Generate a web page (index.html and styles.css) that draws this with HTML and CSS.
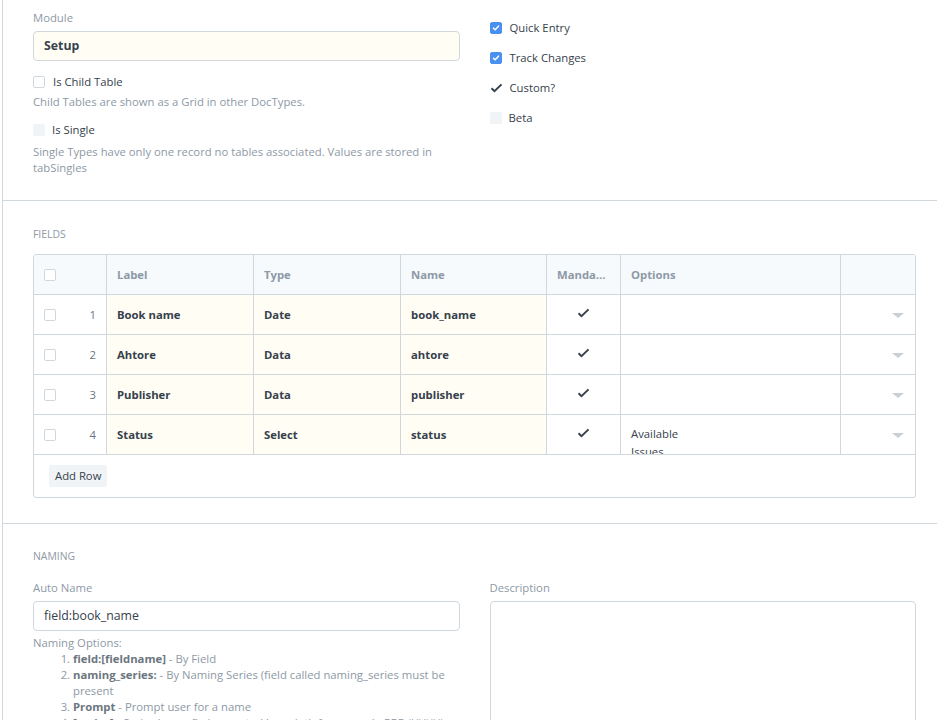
FILE: index.html
```html
<!DOCTYPE html>
<html>
<head>
<meta charset="utf-8">
<link rel="stylesheet" href="styles.css">
</head>
<body>
<div class="layout">
  <section class="section top">
    <div class="col">
      <div class="control-label">Module</div>
      <div class="input bold yellow">Setup</div>
      <div class="check-row first"><span class="box"></span><span class="check-label">Is Child Table</span></div>
      <div class="help one">Child Tables are shown as a Grid in other DocTypes.</div>
      <div class="check-row second"><span class="box disabled"></span><span class="check-label tight">Is Single</span></div>
      <div class="help two">Single Types have only one record no tables associated. Values are stored in tabSingles</div>
    </div>
    <div class="col right">
      <div class="check-row r"><span class="box checked"><svg viewBox="0 0 12 12" width="12" height="12"><path d="M3 6.2l2 2 4-4.4" fill="none" stroke="#fff" stroke-width="1.8" stroke-linecap="round" stroke-linejoin="round"/></svg></span><span class="check-label">Quick Entry</span></div>
      <div class="check-row r"><span class="box checked"><svg viewBox="0 0 12 12" width="12" height="12"><path d="M3 6.2l2 2 4-4.4" fill="none" stroke="#fff" stroke-width="1.8" stroke-linecap="round" stroke-linejoin="round"/></svg></span><span class="check-label">Track Changes</span></div>
      <div class="check-row r"><span class="tick"><svg viewBox="0 0 13 10" width="13" height="10"><path d="M1.5 5.2l3 3 7-6.8" fill="none" stroke="#36414c" stroke-width="2"/></svg></span><span class="check-label tight">Custom?</span></div>
      <div class="check-row r"><span class="box disabled"></span><span class="check-label tight">Beta</span></div>
    </div>
  </section>

  <section class="section fields">
    <div class="section-head">Fields</div>
    <div class="grid">
      <div class="grid-row head">
        <div class="cell idx"><span class="box"></span></div>
        <div class="cell">Label</div>
        <div class="cell">Type</div>
        <div class="cell">Name</div>
        <div class="cell">Manda...</div>
        <div class="cell">Options</div>
        <div class="cell last"></div>
      </div>
      <div class="grid-row">
        <div class="cell idx"><span class="box"></span><span class="num">1</span></div>
        <div class="cell y b">Book name</div>
        <div class="cell y b">Date</div>
        <div class="cell y b">book_name</div>
        <div class="cell c"><svg viewBox="0 0 13 10" width="13" height="10"><path d="M1.5 5.2l3 3 7-6.8" fill="none" stroke="#36414c" stroke-width="2"/></svg></div>
        <div class="cell"></div>
        <div class="cell last"><span class="caret"></span></div>
      </div>
      <div class="grid-row">
        <div class="cell idx"><span class="box"></span><span class="num">2</span></div>
        <div class="cell y b">Ahtore</div>
        <div class="cell y b">Data</div>
        <div class="cell y b">ahtore</div>
        <div class="cell c"><svg viewBox="0 0 13 10" width="13" height="10"><path d="M1.5 5.2l3 3 7-6.8" fill="none" stroke="#36414c" stroke-width="2"/></svg></div>
        <div class="cell"></div>
        <div class="cell last"><span class="caret"></span></div>
      </div>
      <div class="grid-row">
        <div class="cell idx"><span class="box"></span><span class="num">3</span></div>
        <div class="cell y b">Publisher</div>
        <div class="cell y b">Data</div>
        <div class="cell y b">publisher</div>
        <div class="cell c"><svg viewBox="0 0 13 10" width="13" height="10"><path d="M1.5 5.2l3 3 7-6.8" fill="none" stroke="#36414c" stroke-width="2"/></svg></div>
        <div class="cell"></div>
        <div class="cell last"><span class="caret"></span></div>
      </div>
      <div class="grid-row">
        <div class="cell idx"><span class="box"></span><span class="num">4</span></div>
        <div class="cell y b">Status</div>
        <div class="cell y b">Select</div>
        <div class="cell y b">status</div>
        <div class="cell c"><svg viewBox="0 0 13 10" width="13" height="10"><path d="M1.5 5.2l3 3 7-6.8" fill="none" stroke="#36414c" stroke-width="2"/></svg></div>
        <div class="cell opts">Available<br>Issues</div>
        <div class="cell last"><span class="caret"></span></div>
      </div>
      <div class="grid-foot"><button class="btn">Add Row</button></div>
    </div>
  </section>

  <section class="section naming">
    <div class="section-head">Naming</div>
    <div class="cols">
      <div class="col">
        <div class="control-label">Auto Name</div>
        <div class="input">field:book_name</div>
        <div class="help naming-help">Naming Options:
          <ol>
            <li><b>field:[fieldname]</b> - By Field</li>
            <li><b>naming_series:</b> - By Naming Series (field called naming_series must be present</li>
            <li><b>Prompt</b> - Prompt user for a name</li>
            <li><b>[series]</b> - Series by prefix (separated by a dot); for example PRE.#####</li>
          </ol>
        </div>
      </div>
      <div class="col">
        <div class="control-label">Description</div>
        <div class="textarea"></div>
      </div>
    </div>
  </section>
</div>
</body>
</html>
```

FILE: styles.css
```css
* { box-sizing: border-box; }
html, body { margin: 0; padding: 0; background: #fff; overflow: hidden; }
body {
  font-family: "Open Sans", "Noto Sans", sans-serif;
  font-size: 11.3px;
  color: #36414c;
  width: 937px;
  height: 720px;
}
.layout {
  margin-left: 2px;
  border-left: 1px solid #d1d8dd;
  height: 720px;
  overflow: hidden;
}
.section {
  border-bottom: 1px solid #d1d8dd;
  padding: 0 21px 0 30px;
}
.top {
  display: grid;
  grid-template-columns: 1fr 1fr;
  column-gap: 30px;
  padding-top: 10px;
  padding-bottom: 24px;
}
.control-label {
  color: #8d99a6;
  font-size: 11.3px;
  line-height: 16px;
  margin-bottom: 5px;
}
.input {
  height: 30px;
  border: 1px solid #d1d8dd;
  border-radius: 4px;
  padding: 0 10px;
  line-height: 28px;
  font-size: 12.3px;
  color: #36414c;
}
.input.yellow { background: #fffdf4; }
.input.bold { font-weight: 700; }
.check-row {
  display: flex;
  align-items: center;
  height: 16px;
  line-height: 16px;
}
.check-row.first { margin-top: 13px; }
.check-row.second { margin-top: 12px; }
.check-row.r { margin-top: 14px; }
.check-row.r:first-child { margin-top: 10px; }
.box {
  width: 12px;
  height: 12px;
  border: 1px solid #d1d8dd;
  border-radius: 2px;
  background: #fff;
  flex: none;
  display: inline-flex;
  align-items: center;
  justify-content: center;
}
.box.disabled { background: #f0f4f7; border-color: #f0f4f7; }
.box.checked { background: #4a90f0; border-color: #4a90f0; }
.box.checked svg { display: block; }
.tick { width: 13px; flex: none; display: inline-flex; }
.check-label { margin-left: 8px; }
.check-label.tight { margin-left: 7px; }
.help {
  color: #8d99a6;
  font-size: 11.3px;
  line-height: 16px;
}
.help.one { margin-top: 4px; }
.help.two { margin-top: 6px; }

.fields { padding-top: 26px; padding-bottom: 25px; }
.section-head {
  text-transform: uppercase;
  color: #8d99a6;
  font-size: 10.4px;
  line-height: 14px;
  margin-bottom: 13px;
}
.grid {
  border: 1px solid #d1d8dd;
  border-radius: 3px;
  overflow: hidden;
}
.grid-row {
  display: grid;
  grid-template-columns: 73px 147px 147px 146px 74px 220px 1fr;
  height: 40px;
  border-bottom: 1px solid #d1d8dd;
}
.grid-row.head { background: #f7fafc; }
.grid-row.head .cell { font-weight: 700; color: #8d99a6; }
.cell {
  border-right: 1px solid #d1d8dd;
  padding: 10px 10px;
  line-height: 19px;
  overflow: hidden;
  white-space: nowrap;
}
.cell.last { border-right: none; position: relative; }
.cell.y { background: #fffdf4; }
.cell.b { font-weight: 700; }
.cell.c { display: flex; justify-content: center; align-items: center; padding: 0 0 4px 0; }
.cell.idx {
  display: flex;
  align-items: center;
  padding: 0 10px 0 10px;
}
.cell.idx .num { margin-left: auto; color: #6c7680; }
.cell.opts { line-height: 18px; padding-top: 10px; }
.caret {
  position: absolute;
  right: 11px;
  top: 18px;
  width: 0;
  height: 0;
  border-left: 6px solid transparent;
  border-right: 6px solid transparent;
  border-top: 5px solid #c8cfd5;
}
.grid-foot {
  height: 42px;
  padding: 10px 15px;
}
.btn {
  font-family: inherit;
  font-size: 11.3px;
  color: #36414c;
  background: #f0f4f7;
  border: none;
  border-radius: 3px;
  height: 22px;
  padding: 0 6px;
  line-height: 22px;
}

.naming { padding-top: 25px; border-bottom: none; }
.naming .section-head { margin-bottom: 17px; }
.cols {
  display: grid;
  grid-template-columns: 1fr 1fr;
  column-gap: 30px;
}
.naming-help { margin-top: 4px; }
.naming-help ol {
  margin: 0;
  padding-left: 40px;
}
.naming-help b { color: #6c7680; }
.textarea {
  height: 200px;
  border: 1px solid #d1d8dd;
  border-radius: 4px;
}
```
